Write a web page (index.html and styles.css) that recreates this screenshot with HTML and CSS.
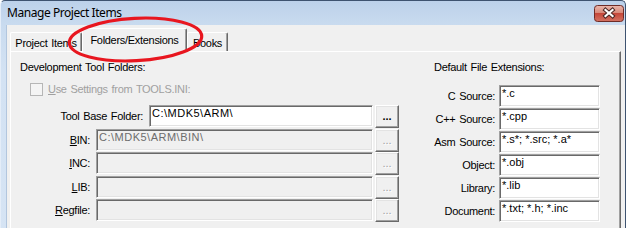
FILE: index.html
```html
<!DOCTYPE html>
<html>
<head>
<meta charset="utf-8">
<title>Manage Project Items</title>
<link rel="stylesheet" href="styles.css">
</head>
<body>
<div class="window">
  <div class="titlebar">
    <span class="title">Manage Project Items</span>
    <svg class="close" width="30" height="17" viewBox="0 0 30 17">
      <defs>
        <linearGradient id="cg" x1="0" y1="0" x2="0" y2="1">
          <stop offset="0" stop-color="#ebb8ad"/>
          <stop offset="0.45" stop-color="#d88a7b"/>
          <stop offset="0.5" stop-color="#c5473a"/>
          <stop offset="1" stop-color="#d37363"/>
        </linearGradient>
      </defs>
      <rect x="0.5" y="0.5" width="29" height="16" rx="3" fill="url(#cg)" stroke="#6e2b26"/>
      <path d="M11.5 5 L18.5 11 M18.5 5 L11.5 11" stroke="#4b2724" stroke-width="4.2" stroke-linecap="square" fill="none"/>
      <path d="M11.5 5 L18.5 11 M18.5 5 L11.5 11" stroke="#ffffff" stroke-width="2.2" stroke-linecap="square" fill="none"/>
    </svg>
  </div>
  <div class="client">
    <div class="tabs">
      <div class="tab tab-items">Project Items</div>
      <div class="tab tab-folders active">Folders/Extensions</div>
      <div class="tab tab-books">Books</div>
    </div>
    <div class="panel">
      <div class="folders">
        <div class="heading">Development Tool Folders:</div>
        <div class="check">
          <span class="box"></span>
          <span><u>U</u>se Settings from TOOLS.INI:</span>
        </div>
        <div class="rows">
          <div class="row base">
            <span class="lbl">Tool Base Folder:</span>
            <div class="field path">C:\MDK5\ARM\</div>
            <div class="btn">...</div>
          </div>
          <div class="row">
            <span class="lbl"><u>B</u>IN:</span>
            <div class="field path off">C:\MDK5\ARM\BIN\</div>
            <div class="btn off">...</div>
          </div>
          <div class="row">
            <span class="lbl"><u>I</u>NC:</span>
            <div class="field path off"></div>
            <div class="btn off">...</div>
          </div>
          <div class="row">
            <span class="lbl"><u>L</u>IB:</span>
            <div class="field path off"></div>
            <div class="btn off">...</div>
          </div>
          <div class="row">
            <span class="lbl"><u>R</u>egfile:</span>
            <div class="field path off"></div>
            <div class="btn off">...</div>
          </div>
        </div>
      </div>
      <div class="extensions">
        <div class="heading">Default File Extensions:</div>
        <div class="ext-grid">
          <span class="lbl">C Source:</span><div class="field">*.c</div>
          <span class="lbl">C++ Source:</span><div class="field">*.cpp</div>
          <span class="lbl">Asm Source:</span><div class="field">*.s*; *.src; *.a*</div>
          <span class="lbl">Object:</span><div class="field">*.obj</div>
          <span class="lbl">Library:</span><div class="field">*.lib</div>
          <span class="lbl">Document:</span><div class="field">*.txt; *.h; *.inc</div>
        </div>
      </div>
    </div>
  </div>
  <svg class="annotation" width="155" height="62" viewBox="0 0 155 62">
    <ellipse cx="75.5" cy="29.5" rx="66.3" ry="21.2" transform="rotate(-3 75.5 29.5)" fill="none" stroke="#e8161f" stroke-width="3.2"/>
  </svg>
</div>
</body>
</html>
```

FILE: styles.css
```css
html, body {
  margin: 0;
  padding: 0;
  overflow: hidden;
  background: #ffffff;
}

body {
  width: 630px;
  height: 228px;
  font-family: "Liberation Sans", Arial, sans-serif;
  font-size: 11px;
  letter-spacing: -0.3px;
  word-spacing: 1px;
  color: #000;
}

.window {
  position: relative;
  width: 626px;
  height: 260px;
  box-sizing: border-box;
  border-top: 1px solid #3e5370;
  border-right: 1px solid #3e5370;
  border-left: 1px solid #e4edf8;
  border-radius: 5px 5px 0 0;
  background: linear-gradient(to bottom, #bcd1ea 0, #c9dbef 24px, #d3e2f3 70px, #d6e4f4 100%);
  display: flex;
  flex-direction: column;
}

.titlebar {
  height: 24px;
  display: flex;
  justify-content: space-between;
  align-items: flex-start;
}

.title {
  font-family: "Noto Sans", "Open Sans", sans-serif;
  font-size: 12px;
  letter-spacing: -0.45px;
  word-spacing: 0;
  line-height: 16px;
  margin-top: 4px;
  padding-left: 6px;
  color: #000;
}

.close {
  display: block;
  margin-top: 4px;
  margin-right: 1px;
}

.client {
  flex: 1;
  margin-left: 5px;
  border-left: 1px solid #b2c6de;
  background: #f0f0f0;
  padding: 3px 4px 0 3px;
  display: flex;
  flex-direction: column;
}

.tabs {
  display: flex;
  align-items: flex-end;
  height: 23px;
  position: relative;
  z-index: 1;
}

.tab {
  box-sizing: border-box;
  height: 19px;
  border-left: 1px solid #fff;
  border-top: 1px solid #fff;
  border-right: 1px solid #696969;
  border-radius: 2px 2px 0 0;
  box-shadow: inset -1px 0 #a0a0a0;
  background: #f0f0f0;
  text-align: center;
  line-height: 13px;
  padding-top: 4px;
  white-space: nowrap;
}

.tab.active {
  height: 24px;
  margin-bottom: -1px;
  padding-top: 5px;
}

.tab-items { width: 72px; }
.tab-folders { width: 105px; }
.tab-books { width: 41px; }

.panel {
  flex: 1;
  box-sizing: border-box;
  border-left: 1px solid #fff;
  border-top: 1px solid #fff;
  border-right: 1px solid #696969;
  box-shadow: inset -1px 0 #a0a0a0;
  padding: 9px 0 0 9px;
  display: flex;
  gap: 35px;
}

.heading {
  height: 13px;
  line-height: 13px;
  white-space: nowrap;
}

.folders {
  width: 379px;
  display: flex;
  flex-direction: column;
}

.check {
  display: flex;
  align-items: center;
  gap: 5px;
  height: 13px;
  margin: 9px 0 0 10px;
  color: #a0a0a0;
  line-height: 13px;
}

.box {
  width: 13px;
  height: 13px;
  box-sizing: border-box;
  border: 1px solid #b6b6b6;
  background: #f4f4f4;
}

.rows {
  margin-top: 9px;
  display: flex;
  flex-direction: column;
  gap: 0.5px;
}

.row {
  display: flex;
  height: 23px;
}

.lbl {
  text-align: right;
  line-height: 13px;
  padding-top: 5px;
  white-space: nowrap;
}

.row .lbl {
  width: 70px;
  flex: none;
  margin-right: 6px;
}

.row.base .lbl {
  width: 123px;
}

.field {
  height: 22px;
  box-sizing: border-box;
  border: 1px solid;
  border-color: #a0a0a0 #fff #fff #a0a0a0;
  box-shadow: inset 1px 1px #696969, inset -1px -1px #e3e3e3;
  background: #fff;
  padding: 1px 2px 0 2px;
  line-height: 13px;
  letter-spacing: 0;
  word-spacing: 0;
  white-space: nowrap;
  overflow: hidden;
}

.field.path {
  letter-spacing: 0.5px;
}

.row .field {
  flex: 1;
}

.field.off {
  background: #f0f0f0;
  color: #6d6d6d;
}

.btn {
  flex: none;
  width: 24px;
  height: 23px;
  margin-left: 2px;
  box-sizing: border-box;
  border: 1px solid;
  border-color: #fff #696969 #696969 #fff;
  box-shadow: inset -1px -1px #a0a0a0, inset 1px 1px #e3e3e3;
  background: #f0f0f0;
  text-align: center;
  font-weight: bold;
  letter-spacing: 0;
  line-height: 13px;
  padding-top: 4px;
}

.btn.off {
  font-weight: normal;
  color: #a0a0a0;
  text-shadow: 1px 1px #fff;
}

.extensions {
  width: 166px;
  display: flex;
  flex-direction: column;
}

.ext-grid {
  margin-top: 11px;
  display: grid;
  grid-template-columns: 61px 101px;
  grid-auto-rows: 22px;
  column-gap: 4px;
  row-gap: 1px;
}

.annotation {
  position: absolute;
  left: 59px;
  top: 9px;
  z-index: 5;
  pointer-events: none;
}
```
